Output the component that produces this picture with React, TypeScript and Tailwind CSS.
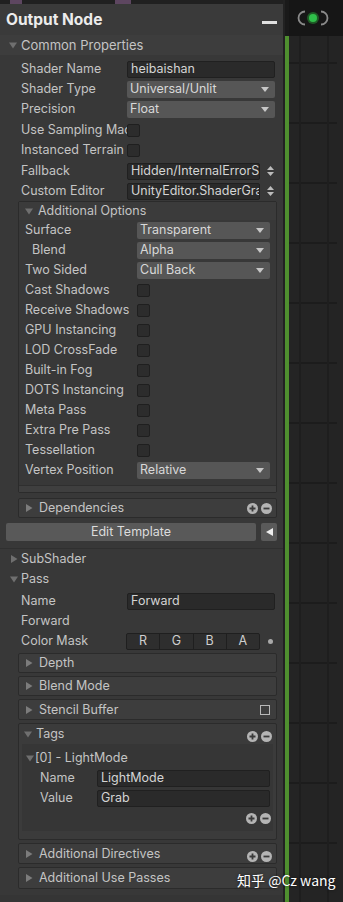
import React from 'react';

// small foldout arrow
const Tri = ({ open, color = '#7c7c7c' }: { open?: boolean; color?: string }) => (
  <svg width="8" height="8" viewBox="0 0 8 8" className="shrink-0">
    <path d={open ? 'M0 1.5h8L4 7.5z' : 'M1 0v8l6.5-4z'} fill={color} />
  </svg>
);

const DropArrow = () => (
  <svg width="8" height="5" viewBox="0 0 8 5" className="shrink-0">
    <path d="M0 0h8L4 5z" fill="#c6c6c6" />
  </svg>
);

const PlusMinus = () => (
  <div className="flex gap-[3px]">
    <svg width="11" height="11" viewBox="0 0 11 11">
      <circle cx="5.5" cy="5.5" r="5.5" fill="#b4b4b4" />
      <path d="M2.5 5.5h6M5.5 2.5v6" stroke="#3a3a3a" strokeWidth="1.8" />
    </svg>
    <svg width="11" height="11" viewBox="0 0 11 11">
      <circle cx="5.5" cy="5.5" r="5.5" fill="#b4b4b4" />
      <path d="M2.5 5.5h6" stroke="#3a3a3a" strokeWidth="1.8" />
    </svg>
  </div>
);

const TextField = ({ value, className = '' }: { value: string; className?: string }) => (
  <div
    className={`shrink-0 h-[17px] flex items-center bg-[#2a2a2a] border border-[#202020] rounded-[2px] px-[3px] text-[#d4d4d4] overflow-hidden whitespace-nowrap ${className}`}
  >
    {value}
  </div>
);

const Dropdown = ({ value, className = '' }: { value: string; className?: string }) => (
  <div
    className={`shrink-0 h-[17px] flex items-center justify-between bg-[#565656] rounded-[2px] pl-[3px] pr-[6px] text-[#d8d8d8] ${className}`}
  >
    <span>{value}</span>
    <DropArrow />
  </div>
);

const Check = () => (
  <div className="shrink-0 w-[13px] h-[13px] bg-[#2c2c2c] border border-[#1f1f1f] rounded-[2px]" />
);

const Arrows = () => (
  <svg width="7" height="10" viewBox="0 0 7 10" className="ml-[7px] shrink-0">
    <path d="M0 4h7L3.5 0zM0 6h7L3.5 10z" fill="#bcbcbc" />
  </svg>
);

// top level row
const Row = ({ label, children, className = '' }: { label: string; children?: React.ReactNode; className?: string }) => (
  <div className={`flex items-center h-[20px] pl-[21px] ${className}`}>
    <div className="w-[106px] shrink-0 overflow-hidden whitespace-nowrap leading-[20px]">{label}</div>
    {children}
  </div>
);

// row inside Additional Options
const OptRow = ({ label, children, indent }: { label: string; children?: React.ReactNode; indent?: boolean }) => (
  <div className="flex items-center h-[20px] pl-[6px]">
    <div className={`w-[112px] shrink-0 whitespace-nowrap ${indent ? 'pl-[7px]' : ''}`}>{label}</div>
    {children}
  </div>
);

const Foldout = ({ title, right, className = '' }: { title: string; right?: React.ReactNode; className?: string }) => (
  <div
    className={`ml-[18px] w-[259px] flex items-center bg-[#3d3d3d] border border-[#2b2b2b] rounded-[2px] pl-[6px] pr-[4px] ${className}`}
  >
    <Tri />
    <span className="ml-[6px] flex-1">{title}</span>
    {right}
  </div>
);

const App = () => {
  const options: { label: string; value?: string; indent?: boolean }[] = [
    { label: 'Surface', value: 'Transparent' },
    { label: 'Blend', value: 'Alpha', indent: true },
    { label: 'Two Sided', value: 'Cull Back' },
    { label: 'Cast Shadows' },
    { label: 'Receive Shadows' },
    { label: 'GPU Instancing' },
    { label: 'LOD CrossFade' },
    { label: 'Built-in Fog' },
    { label: 'DOTS Instancing' },
    { label: 'Meta Pass' },
    { label: 'Extra Pre Pass' },
    { label: 'Tessellation' },
    { label: 'Vertex Position', value: 'Relative' },
  ];

  return (
    <div className="relative w-[343px] h-[902px] overflow-hidden flex bg-[#1a1a1a] font-[Inter,'Noto_Sans',sans-serif] text-[12.5px] text-[#c4c4c4] leading-[16px]">
      {/* Inspector panel */}
      <div className="w-[283px] shrink-0 bg-[#383838] flex flex-col">
        <div className="h-[4px] bg-[#202020] flex">
          <div className="ml-[10px] w-[12px] bg-[#5d4660]" />
          <div className="ml-[93px] w-[16px] bg-[#5d4660]" />
        </div>

        {/* header */}
        <div className="h-[31px] flex items-center justify-between pl-[6px] pr-[6px] bg-[#3a3a3a]">
          <span className="text-[15.5px] font-bold text-[#ececec]">Output Node</span>
          <div className="w-[15px] h-[3px] bg-[#e0e0e0] mt-[6px]" />
        </div>

        <div className="h-[20px] flex items-center pl-[9px] bg-[#3d3d3d] text-[13px]">
          <Tri open color="#6f6f6f" />
          <span className="ml-[4px]">Common Properties</span>
        </div>

        <div className="mt-[4px]">
          <Row label="Shader Name">
            <TextField value="heibaishan" className="w-[148px]" />
          </Row>
          <Row label="Shader Type">
            <Dropdown value="Universal/Unlit" className="w-[148px]" />
          </Row>
          <Row label="Precision">
            <Dropdown value="Float" className="w-[148px]" />
          </Row>
          <Row label="Use Sampling Macros" className="mt-[1px]">
            <Check />
          </Row>
          <Row label="Instanced Terrain">
            <Check />
          </Row>
          <Row label="Fallback" className="mt-[1px]">
            <TextField value="Hidden/InternalErrorShader" className="w-[133px]" />
            <Arrows />
          </Row>
          <Row label="Custom Editor">
            <TextField value="UnityEditor.ShaderGraph.PBRMasterGUI" className="w-[133px]" />
            <Arrows />
          </Row>
        </div>

        {/* Additional Options */}
        <div className="ml-[18px] w-[259px] border border-[#2b2b2b] rounded-[2px] bg-[#383838] flex flex-col">
          <div className="h-[18px] flex items-center pl-[6px] bg-[#3b3b3b]">
            <Tri open color="#6f6f6f" />
            <span className="ml-[5px]">Additional Options</span>
          </div>
          {options.map((o) => (
            <OptRow key={o.label} label={o.label} indent={o.indent}>
              {o.value ? <Dropdown value={o.value} className="w-[133px]" /> : <Check />}
            </OptRow>
          ))}
          <div className="h-[5px]" />
          <div className="h-[7px] bg-[#3f3f3f] border-t border-[#2f2f2f]" />
        </div>

        <Foldout title="Dependencies" right={<PlusMinus />} className="mt-[5px] h-[20px]" />

        <div className="mt-[4px] flex items-center pl-[6px] h-[19px]">
          <div className="w-[250px] h-[18px] flex items-center justify-center bg-[#595959] rounded-[2px] text-[#dcdcdc]">
            Edit Template
          </div>
          <div className="ml-[5px] w-[16px] h-[18px] flex items-center justify-center bg-[#5a5a5a] rounded-[2px]">
            <svg width="7" height="8" viewBox="0 0 7 8">
              <path d="M7 0v8L0 4z" fill="#eeeeee" />
            </svg>
          </div>
        </div>

        <div className="mt-[7px] border-t border-[#303030]" />
        <div className="h-[20px] flex items-center pl-[10px]">
          <Tri color="#6f6f6f" />
          <span className="ml-[3px]">SubShader</span>
        </div>
        <div className="h-[20px] flex items-center pl-[10px]">
          <Tri open color="#6f6f6f" />
          <span className="ml-[3px]">Pass</span>
        </div>

        <div className="mt-[2px]">
          <Row label="Name">
            <TextField value="Forward" className="w-[148px]" />
          </Row>
          <Row label="Forward" />
          <div className="flex items-center h-[20px] pl-[21px]">
            <div className="w-[105px]">Color Mask</div>
            <div className="w-[134px] h-[17px] flex bg-[#2e2e2e] border border-[#1f1f1f] rounded-[2px] text-[#cfcfcf]">
              {['R', 'G', 'B', 'A'].map((c, i) => (
                <div
                  key={c}
                  className={`flex-1 flex items-center justify-center ${i > 0 ? 'border-l border-[#1f1f1f]' : ''}`}
                >
                  {c}
                </div>
              ))}
            </div>
            <div className="ml-[8px] w-[5px] h-[5px] rounded-full bg-[#a9a9a9]" />
          </div>
        </div>

        <Foldout title="Depth" className="mt-[2px] h-[20px]" />
        <Foldout title="Blend Mode" className="mt-[3px] h-[20px]" />
        <Foldout
          title="Stencil Buffer"
          right={<div className="w-[10px] h-[10px] border border-[#b8b8b8] mr-[2px]" />}
          className="mt-[3px] h-[21px]"
        />

        {/* Tags */}
        <div className="mt-[3px] ml-[18px] w-[259px] border border-[#2b2b2b] rounded-[2px] bg-[#3b3b3b] flex flex-col">
          <div className="h-[20px] flex items-center pl-[5px] pr-[4px]">
            <Tri open color="#6f6f6f" />
            <span className="ml-[4px] flex-1">Tags</span>
            <div className="mt-[4px]">
              <PlusMinus />
            </div>
          </div>
          <div className="mx-[3px] bg-[#363636] flex flex-col">
            <div className="h-[20px] flex items-center pl-[4px] mt-[4px]">
              <Tri open color="#6f6f6f" />
              <span className="ml-[1px]">[0] - LightMode</span>
            </div>
            <div className="flex items-center h-[20px] pl-[18px]">
              <div className="w-[57px]">Name</div>
              <TextField value="LightMode" className="w-[173px]" />
            </div>
            <div className="flex items-center h-[20px] pl-[18px]">
              <div className="w-[57px]">Value</div>
              <TextField value="Grab" className="w-[173px]" />
            </div>
            <div className="h-[20px] flex items-center justify-end pr-[2px]">
              <PlusMinus />
            </div>
            <div className="h-[3px]" />
          </div>
          <div className="h-[8px]" />
        </div>

        <Foldout
          title="Additional Directives"
          right={
            <div className="mt-[5px]">
              <PlusMinus />
            </div>
          }
          className="mt-[3px] h-[21px]"
        />
        <Foldout title="Additional Use Passes" className="mt-[3px] h-[22px]" />
        <div className="flex-1 bg-[#353535] mt-[6px]" />
      </div>

      {/* separator + green border */}
      <div className="w-[2px] bg-[#222222]" />
      <div className="w-[4px] flex flex-col">
        <div className="h-[36px] bg-[#1a1a1a]" />
        <div className="flex-1 bg-[#4f8f2f]" />
      </div>

      {/* canvas */}
      <div className="flex-1 flex flex-col">
        <div className="h-[36px] bg-[#161616] flex items-center pl-[7px]">
          <svg width="34" height="20" viewBox="0 0 34 20">
            <path d="M9 3.5A6.5 6.5 0 0 0 9 16.5" stroke="#8a8a8a" strokeWidth="1.8" fill="none" />
            <path d="M25 3.5A6.5 6.5 0 0 1 25 16.5" stroke="#8a8a8a" strokeWidth="1.8" fill="none" />
            <circle cx="17" cy="10" r="6" fill="#1f5a26" />
            <circle cx="17" cy="10" r="4" fill="#2fbf4a" />
          </svg>
        </div>
        <div className="flex-1 bg-[#242424]">
          <svg width="48" height="866" viewBox="0 0 48 866">
            {[26, 86, 146, 206, 266, 326, 386, 446, 506, 566, 626, 686, 746, 806].map((y) => (
              <rect key={y} x="0" y={y} width="48" height="2" fill="#1c1c1c" />
            ))}
            {[10, 38].map((x) => (
              <rect key={x} x={x} y="0" width="2" height="866" fill="#1e1e1e" />
            ))}
          </svg>
        </div>
      </div>

      {/* watermark */}
      <div className="absolute left-[237px] top-[871px] text-[14px] leading-[18px] text-white font-['Noto_Sans_CJK_SC',Inter,sans-serif] [text-shadow:0_0_3px_rgba(0,0,0,0.6)] whitespace-nowrap">
        知乎 @Cz wang
      </div>
    </div>
  );
};

export default App;
